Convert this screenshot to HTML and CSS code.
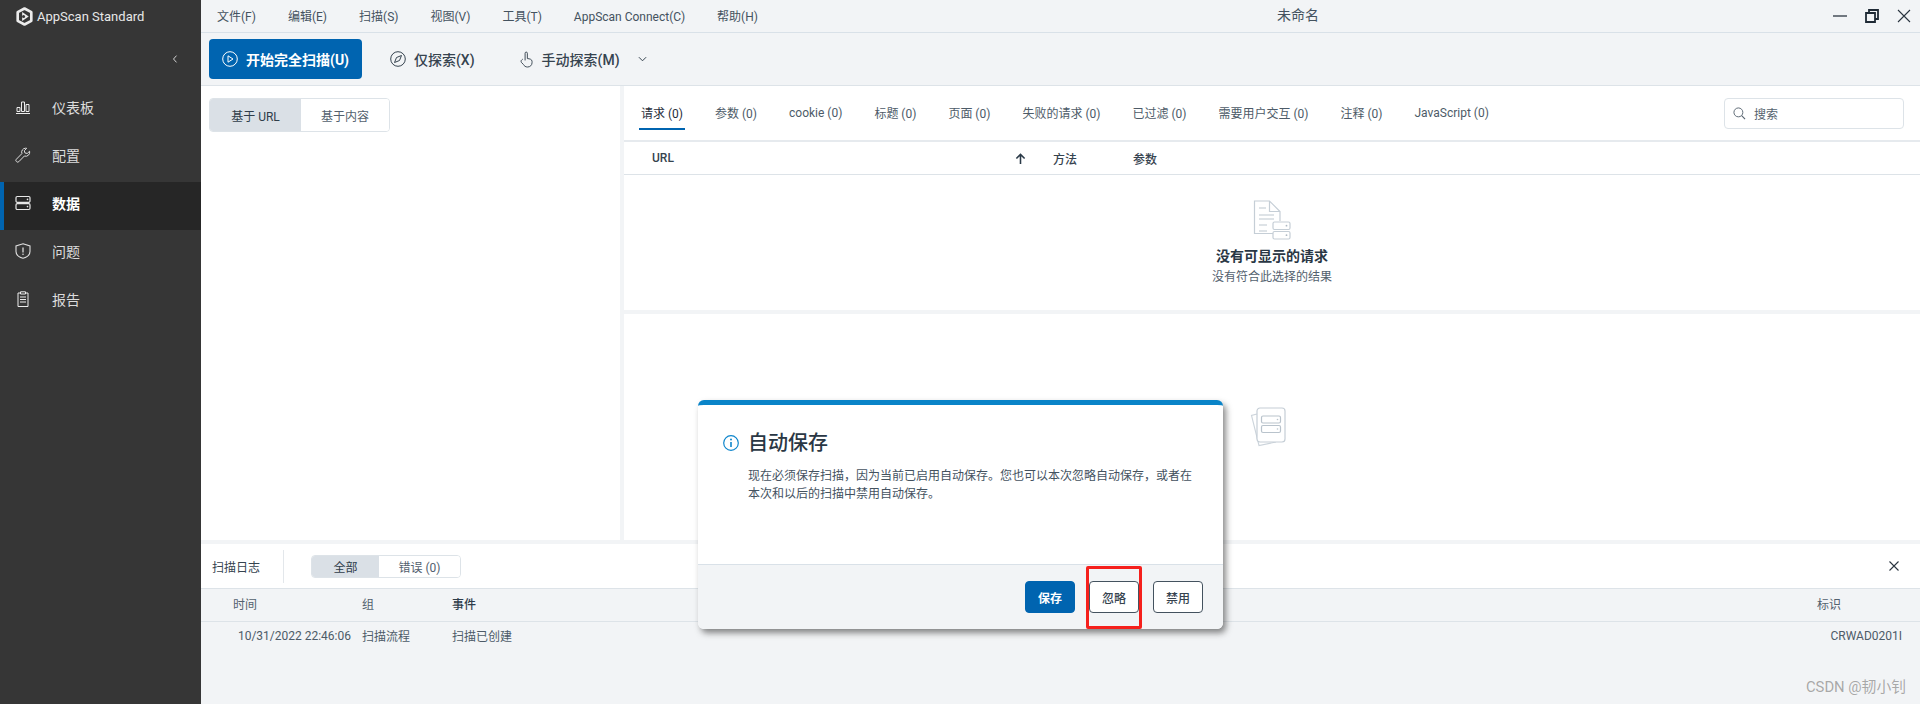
FILE: index.html
```html
<!DOCTYPE html>
<html lang="zh">
<head>
<meta charset="utf-8">
<title>AppScan Standard</title>
<link rel="stylesheet" href="styles.css">
</head>
<body>
<div class="app">
  <aside class="sidebar">
    <div class="brand">
      <svg class="brand-logo" viewBox="0 0 18 20" width="17" height="19"><path d="M9 1.500 16.200 5.400V14.600L9 18.500 1.800 14.600V5.400Z" fill="none" stroke="#ececec" stroke-width="2.800" stroke-linejoin="round"/><path d="M6.500 5.200 13.500 10 6.500 14.800Z" fill="#ececec"/><circle cx="8" cy="10" r="1.600" fill="#363636"/></svg>
      <span>AppScan Standard</span>
    </div>
    <div class="collapse"><svg viewBox="0 0 8 12" width="6" height="10"><path d="M6 1.500 2 6l4 4.500" fill="none" stroke="#e4e4e4" stroke-width="1.200"/></svg></div>
    <nav class="nav">
      <a class="nav-item">
        <svg class="nav-icon" viewBox="0 0 16 16"><path d="M1 14.500h14M2 8.500h3v4H2zM6.500 3h3v9.500h-3zM11 5.500h3v7h-3z" fill="none" stroke="#ececec"/></svg>
        <span>仪表板</span>
      </a>
      <a class="nav-item">
        <svg class="nav-icon" viewBox="0 0 16 16"><path d="M10.500 1.200a4 4 0 0 0-3.600 5.400L1.300 12.300a1.500 1.500 0 0 0 0 2.100l.4.300a1.500 1.500 0 0 0 2.100 0l5.600-5.700a4 4 0 0 0 5.200-4.800l-2.400 2.300-2.300-.6-.6-2.200 2.400-2.400a4 4 0 0 0-1.200-.1Z" fill="none" stroke="#dedede"/></svg>
        <span>配置</span>
      </a>
      <a class="nav-item active">
        <svg class="nav-icon" viewBox="0 0 16 16"><rect x="1" y="1.500" width="14" height="5.800" rx="1.200" fill="none" stroke="#e6e6e6" stroke-width="1.200"/><rect x="1" y="8.700" width="14" height="5.800" rx="1.200" fill="none" stroke="#e6e6e6" stroke-width="1.200"/><circle cx="12.500" cy="4.400" r=".8" fill="#e6e6e6"/><circle cx="12.500" cy="11.600" r=".8" fill="#e6e6e6"/></svg>
        <span>数据</span>
      </a>
      <a class="nav-item">
        <svg class="nav-icon" viewBox="0 0 16 16"><path d="M8 .800 15 3v5.500c0 3.300-3 5.700-7 6.700-4-1-7-3.400-7-6.700V3Z" fill="none" stroke="#dedede" stroke-width="1.100"/><path d="M8 4.500v5" stroke="#dedede" stroke-width="1.300"/><circle cx="8" cy="11.200" r=".8" fill="#dedede"/></svg>
        <span>问题</span>
      </a>
      <a class="nav-item">
        <svg class="nav-icon" viewBox="0 0 16 16"><path d="M5.500 2H3v13.500h10V2h-2.500M5.500 .800h5v2.200h-5zM5 6h6M5 8.500h6M5 11h6" fill="none" stroke="#ececec"/></svg>
        <span>报告</span>
      </a>
    </nav>
  </aside>

  <main class="main">
    <header class="menubar">
      <div class="menu">
        <span>文件(F)</span><span>编辑(E)</span><span>扫描(S)</span><span>视图(V)</span><span>工具(T)</span><span>AppScan Connect(C)</span><span>帮助(H)</span>
      </div>
      <div class="doc-title">未命名</div>
      <div class="win-controls">
        <svg viewBox="0 0 14 14" width="14" height="14"><path d="M0 7h14" stroke="#2a3540" stroke-width="1.300"/></svg>
        <svg viewBox="0 0 14 14" width="14" height="14"><path d="M1 4h9v9H1zM4 4V1h9v9h-3" fill="none" stroke="#1f2a35" stroke-width="1.800"/></svg>
        <svg viewBox="0 0 14 14" width="14" height="14"><path d="M1 1l12 12M13 1 1 13" stroke="#2a3540" stroke-width="1.100"/></svg>
      </div>
    </header>

    <div class="toolbar">
      <button class="scan-btn">
        <svg viewBox="0 0 16 16" width="16" height="16"><circle cx="8" cy="8" r="7.300" fill="none" stroke="#fff"/><path d="M6 4.800 11 8l-5 3.200Z" fill="none" stroke="#fff"/></svg>
        <span>开始完全扫描(U)</span>
      </button>
      <div class="tool tool-explore">
        <svg viewBox="0 0 16 16" width="16" height="16"><circle cx="8" cy="8" r="7.300" fill="none" stroke="#36434f"/><path d="M11.500 4.500 9.500 9.500 4.500 11.500 6.500 6.500Z" fill="none" stroke="#36434f"/></svg>
        <span>仅探索(X)</span>
      </div>
      <div class="tool tool-manual">
        <svg viewBox="0 0 16 18" width="15" height="17"><path d="M6.500 10V2.300a1.200 1.200 0 0 1 2.400 0V8c2.500.2 5 .8 5 3v1.500c0 2.500-2 4.500-4.700 4.500-2.300 0-3.500-1-4.500-2.700L2.500 12c-.5-1-.3-2 .5-2.600l1-.8" fill="none" stroke="#36434f"/></svg>
        <span>手动探索(M)</span>
      </div>
      <svg class="tool-caret" viewBox="0 0 10 6" width="9" height="6"><path d="M1 1l4 4 4-4" fill="none" stroke="#36434f" stroke-width="1.100"/></svg>
    </div>

    <div class="panes">
      <section class="left-pane">
        <div class="segment segment-url">
          <span class="seg active">基于 URL</span>
          <span class="seg">基于内容</span>
        </div>
      </section>
      <section class="right-pane">
        <div class="tabs-row">
          <div class="tabs">
            <span class="tab active">请求 (0)</span>
            <span class="tab">参数 (0)</span>
            <span class="tab">cookie (0)</span>
            <span class="tab">标题 (0)</span>
            <span class="tab">页面 (0)</span>
            <span class="tab">失败的请求 (0)</span>
            <span class="tab">已过滤 (0)</span>
            <span class="tab">需要用户交互 (0)</span>
            <span class="tab">注释 (0)</span>
            <span class="tab">JavaScript (0)</span>
          </div>
          <div class="search">
            <svg viewBox="0 0 14 14" width="13" height="13"><circle cx="5.800" cy="5.800" r="4.800" fill="none" stroke="#55626e"/><path d="M9.300 9.300 13 13" stroke="#55626e" stroke-width="1.200"/></svg>
            <span>搜索</span>
          </div>
        </div>
        <div class="col-head">
          <span class="col-url">URL</span>
          <svg class="col-arrow" viewBox="0 0 12 12" width="11" height="11"><path d="M6 12V1.500M1.500 6 6 1.500 10.500 6" fill="none" stroke="#2b3a48" stroke-width="1.700"/></svg>
          <span class="col-method">方法</span>
          <span class="col-param">参数</span>
        </div>
        <div class="empty">
          <svg viewBox="0 0 38 40" width="38" height="40"><path d="M23 33.500H1.500V1h15L27 11.500V21M16.500 1v10.500H27" fill="none" stroke="#c5ced6" stroke-width="1.200"/><path d="M6 8h7M6 15h15M6 19h15M6 25h8M6 31h8" stroke="#d3dae0" stroke-width="1.500"/><rect x="20" y="22" width="17" height="7.500" rx="1.500" fill="#fff" stroke="#c5ced6" stroke-width="1.200"/><rect x="20" y="31.500" width="17" height="7.500" rx="1.500" fill="#fff" stroke="#c5ced6" stroke-width="1.200"/><circle cx="33.500" cy="25.700" r=".9" fill="#aeb9c3"/><circle cx="33.500" cy="35.200" r=".9" fill="#aeb9c3"/></svg>
          <strong class="empty-title">没有可显示的请求</strong>
          <span class="empty-sub">没有符合此选择的结果</span>
        </div>
        <div class="lower">
          <svg viewBox="0 0 36 42" width="36" height="42"><path d="M7 7 1.500 8.500 9 38.500 26 35" fill="none" stroke="#ccd4db" stroke-width="1.100"/><rect x="7" y="1" width="28" height="34" rx="3" fill="#fff" stroke="#c5ced6" stroke-width="1.200"/><rect x="11.500" y="9" width="19" height="7" rx="1.500" fill="none" stroke="#b9c3cc" stroke-width="1.200"/><rect x="11.500" y="18.500" width="19" height="7" rx="1.500" fill="none" stroke="#b9c3cc" stroke-width="1.200"/><circle cx="27.500" cy="12.500" r=".8" fill="#b9c3cc"/><circle cx="27.500" cy="22" r=".8" fill="#b9c3cc"/></svg>
        </div>
      </section>
    </div>

    <section class="log">
      <div class="log-head">
        <span class="log-title">扫描日志</span>
        <div class="log-sep"></div>
        <div class="segment segment-log">
          <span class="seg active">全部</span>
          <span class="seg">错误 (0)</span>
        </div>
        <svg class="log-close" viewBox="0 0 10 10" width="10" height="10"><path d="M.5.500l9 9M9.500.500l-9 9" stroke="#2a3540" stroke-width="1.100"/></svg>
      </div>
      <div class="log-grid log-cols">
        <span class="cell-time-head">时间</span>
        <span class="cell-group">组</span>
        <span class="cell-event-head">事件</span>
        <span>标识</span>
      </div>
      <div class="log-grid log-row">
        <span class="cell-time">10/31/2022 22:46:06</span>
        <span class="cell-group">扫描流程</span>
        <span>扫描已创建</span>
        <span class="cell-id">CRWAD0201I</span>
      </div>
    </section>
  </main>
</div>

<div class="dialog">
  <div class="dialog-body">
    <div class="dialog-title">
      <svg viewBox="0 0 16 16" width="16" height="16"><circle cx="8" cy="8" r="7.300" fill="none" stroke="#0f86cc" stroke-width="1.200"/><path d="M8 7v5" stroke="#0f86cc" stroke-width="1.600"/><circle cx="8" cy="4.500" r="1" fill="#0f86cc"/></svg>
      <span>自动保存</span>
    </div>
    <p class="dialog-text">现在必须保存扫描，因为当前已启用自动保存。您也可以本次忽略自动保存，或者在本次和以后的扫描中禁用自动保存。</p>
  </div>
  <div class="dialog-foot">
    <button class="btn btn-primary">保存</button>
    <button class="btn">忽略</button>
    <button class="btn">禁用</button>
  </div>
</div>
<div class="annotation"></div>
<div class="watermark">CSDN @韧小钊</div>
</body>
</html>
```

FILE: styles.css
```css
* { box-sizing: border-box; }
html, body { margin: 0; height: 100%; overflow: hidden; }
body {
  font-family: Roboto, "Noto Sans CJK SC", sans-serif;
  font-size: 12px;
  color: #44525f;
  background: #fff;
}
svg { display: block; flex: none; }
button { font-family: inherit; cursor: default; }

.app { display: flex; height: 704px; }

/* Sidebar */
.sidebar { width: 201px; flex: none; background: #363636; color: #e2e2e2; }
.brand { height: 33px; display: flex; align-items: center; gap: 4px; padding: 0 0 0 16px; font-size: 13px; color: #e8e8e8; }
.collapse { height: 53px; display: flex; justify-content: flex-end; align-items: flex-start; padding: 21px 23px 0 0; }
.nav { display: flex; flex-direction: column; }
.nav-item { height: 48px; display: flex; align-items: center; gap: 21px; padding: 0 0 6px 15px; font-size: 14px; color: #dcdcdc; }
.nav-icon { width: 16px; height: 16px; }
.nav-item.active { background: #262626; color: #fff; font-weight: 700; box-shadow: inset 4px 0 0 #0064b0; }

/* Main */
.main { flex: 1; min-width: 0; display: flex; flex-direction: column; }
.menubar { height: 33px; flex: none; display: flex; align-items: center; background: #f2f4f6; border-bottom: 1px solid #d9e1e8; padding: 0 9px 0 16px; }
.menu { display: flex; align-items: baseline; gap: 32px; color: #44525f; margin-bottom: 2px; }
.doc-title { margin: 0 0 4px 519px; font-size: 14px; color: #44525f; }
.win-controls { margin-left: auto; display: flex; gap: 18px; }

.toolbar { height: 53px; flex: none; display: flex; align-items: center; background: #f2f4f6; border-bottom: 1px solid #dde3e8; padding-left: 8px; font-size: 14px; color: #36434f; }
.scan-btn { width: 153px; height: 40px; border: 0; border-radius: 4px; background: #0064b0; color: #fff; font-size: 14px; font-weight: 700; display: flex; align-items: center; gap: 8px; padding: 0 0 0 13px; white-space: nowrap; }
.tool { display: flex; align-items: center; gap: 8px; font-weight: 500; white-space: nowrap; }
.tool-explore { margin-left: 28px; }
.tool-manual { margin-left: 44px; }
.tool-caret { margin-left: 18px; }

.panes { height: 454px; flex: none; display: flex; }
.left-pane { width: 423px; flex: none; border-right: 4px solid #f2f4f6; padding: 12px 0 0 8px; }
.right-pane { flex: 1; min-width: 0; display: flex; flex-direction: column; }

.segment { display: inline-flex; border: 1px solid #dde3e8; border-radius: 4px; overflow: hidden; color: #53616e; }
.seg { display: flex; align-items: center; justify-content: center; background: #fff; }
.seg.active { background: #dae0e6; color: #2f3d4a; }
.segment-url { width: 181px; height: 34px; }
.segment-url .seg { flex: 1; }
.segment-url .seg.active { flex: none; width: 91px; }

.tabs-row { height: 56px; flex: none; display: flex; align-items: flex-start; border-bottom: 2px solid #e6eaee; padding: 12px 16px 0 15px; }
.tabs { display: flex; gap: 28px; }
.tab { height: 32px; padding: 0 2px 1px; display: flex; align-items: center; color: #4d5b68; white-space: nowrap; border-bottom: 2px solid transparent; }
.tab.active { color: #1f2d3a; border-bottom-color: #0064b0; }
.search { margin-left: auto; width: 180px; height: 31px; border: 1px solid #dde3e8; border-radius: 4px; display: flex; align-items: center; gap: 8px; padding: 0 8px; color: #55626e; }

.col-head { height: 33px; flex: none; display: flex; align-items: center; border-bottom: 1px solid #dde3e8; color: #36434f; font-weight: 500; }
.col-url { margin-left: 28px; }
.col-arrow { margin-left: 341px; }
.col-method { margin-left: 27px; }
.col-param { margin-left: 56px; }

.empty { height: 139px; flex: none; display: flex; flex-direction: column; align-items: center; padding-top: 25px; border-bottom: 4px solid #f2f4f6; }
.empty-title { margin-top: 6px; font-size: 14px; line-height: 20px; color: #2a3744; }
.empty-sub { margin-top: 2px; line-height: 18px; color: #53616e; }
.lower { flex: 1; display: flex; justify-content: center; padding: 93px 8px 0 0; }

/* Log */
.log { flex: 1; min-height: 0; display: flex; flex-direction: column; background: #f2f4f6; border-top: 4px solid #f2f4f6; }
.log-head { height: 45px; flex: none; display: flex; align-items: center; background: #fff; border-bottom: 1px solid #dde3e8; padding: 0 21px 0 11px; color: #36434f; }
.log-title { width: 71px; }
.log-sep { width: 1px; height: 33px; background: #e3e7eb; margin-right: 27px; }
.segment-log { width: 150px; height: 23px; }
.segment-log .seg { flex: 1; }
.segment-log .seg.active { flex: none; width: 67px; }
.log-close { margin-left: auto; }

.log-grid { display: grid; grid-template-columns: 154px 97px 1fr 103px; align-items: center; }
.log-cols { height: 33px; border-bottom: 1px solid #dde3e8; color: #53616e; padding-bottom: 3px; }
.cell-time-head { padding-left: 32px; }
.cell-group { padding-left: 7px; }
.cell-event-head { color: #2f3d4a; font-weight: 500; }
.log-row { height: 30px; color: #4d5b68; padding-bottom: 3px; }
.cell-time { text-align: right; padding-right: 4px; }
.cell-id { text-align: right; padding-right: 18px; }

/* Overlays */
.dialog { position: absolute; left: 698px; top: 400px; width: 525px; height: 229px; display: flex; flex-direction: column; background: #fff; border-top: 5px solid #0a84c8; border-radius: 6px; overflow: hidden; box-shadow: 3px 4px 6px rgba(40, 40, 40, .55); }
.dialog-body { flex: 1; padding: 24px 20px 0 25px; }
.dialog-title { display: flex; align-items: center; gap: 9px; font-size: 20px; line-height: 28px; font-weight: 500; color: #2a3744; }
.dialog-text { margin: 10px 0 0 25px; line-height: 18px; color: #44525f; }
.dialog-foot { height: 65px; flex: none; display: flex; justify-content: flex-end; align-items: flex-start; gap: 14px; background: #f2f4f6; border-top: 1px solid #d9e1e8; padding: 16px 20px 0 0; }
.btn { width: 50px; height: 32px; padding: 0; border: 1px solid #44525f; border-radius: 4px; background: #fff; color: #36434f; font-size: 12px; font-weight: 500; }
.btn-primary { border-color: #0064b0; background: #0064b0; color: #fff; font-weight: 700; }
.annotation { position: absolute; left: 1086px; top: 566px; width: 56px; height: 63px; border: 3px solid #f5201c; border-radius: 2px; }
.watermark { position: absolute; right: 14px; top: 678px; font-size: 14.800px; line-height: 18px; color: #a8a8a8; text-shadow: 0 0 1px #fff; }
```
